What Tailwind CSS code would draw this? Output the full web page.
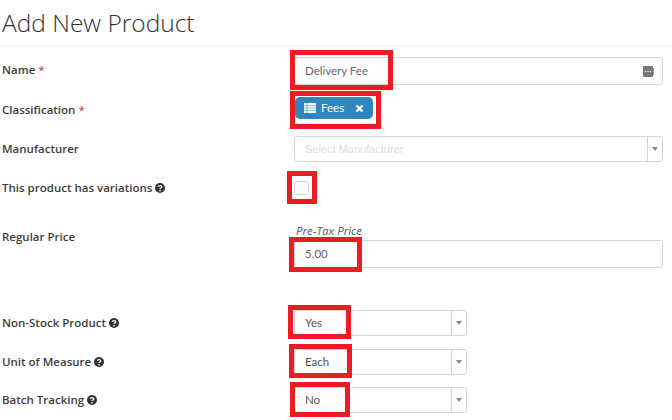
<!DOCTYPE html>
<html lang="en">
<head>
  <meta charset="UTF-8" />
  <title>Add New Product</title>
  <script src="https://cdn.jsdelivr.net/npm/@tailwindcss/browser@4"></script>
</head>
<body class="bg-white font-['Open_Sans',sans-serif] text-[#333]">
  <div class="relative w-[672px] h-[420px] overflow-hidden">

    <!-- heading -->
    <div class="h-[46px] pl-[2px] border-b border-[#f0f0f0]">
      <h1 class="text-[24.5px] leading-[46px] font-light text-[#333]">Add New Product</h1>
    </div>

    <div class="pt-[11px] pl-[2px] pr-[9px] flex flex-col">

      <!-- name -->
      <div class="flex h-[28px] mb-[12px]">
        <div class="w-[292px] text-[11.5px] font-semibold leading-[26px] text-[#3d3d3d]">Name <span class="text-[#c9504a]">*</span></div>
        <div class="flex-1 flex items-center justify-between border border-[#d5d5d5] rounded-[3px] pl-[10px] pr-[8px]">
          <span class="font-['Lato',sans-serif] text-[11.5px] text-[#666]">Delivery Fee</span>
          <svg width="11" height="11" viewBox="0 0 11 11"><rect width="10" height="11" rx="1" fill="#777"/><rect x="10" y="2" width="1" height="7" fill="#999"/><circle cx="2.5" cy="5.5" r="0.7" fill="#fff"/><circle cx="5" cy="5.5" r="0.7" fill="#fff"/><circle cx="7.5" cy="5.5" r="0.7" fill="#fff"/></svg>
        </div>
      </div>

      <!-- classification -->
      <div class="flex h-[22px] mb-[17px]">
        <div class="w-[293px] text-[11.5px] font-semibold leading-[26px] text-[#3d3d3d]">Classification <span class="text-[#c9504a]">*</span></div>
        <div class="w-[78px] h-[22px] flex items-center bg-[#2f86bd] rounded-[5px] pl-[9px] pr-[9px] text-white">
          <svg width="12" height="10" viewBox="0 0 12 10" class="mr-[5px]"><rect width="12" height="10" fill="#fff"/><path d="M0 2.6H12M0 5H12M0 7.4H12M3 0V10" stroke="#2f86bd" stroke-width="0.6"/></svg>
          <span class="font-['Lato',sans-serif] text-[11.5px]">Fees</span>
          <svg width="9" height="9" viewBox="0 0 9 9" class="ml-auto"><path d="M1.5 1.5L7.5 7.5M7.5 1.5L1.5 7.5" stroke="#fff" stroke-width="2.4"/></svg>
        </div>
      </div>

      <!-- manufacturer -->
      <div class="flex h-[26px] mb-[19px]">
        <div class="w-[292px] text-[11.5px] font-semibold leading-[26px] text-[#3d3d3d]">Manufacturer</div>
        <div class="flex-1 flex items-center border border-[#d5d5d5] rounded-[4px]">
          <span class="flex-1 pl-[10px] font-['Liberation_Sans',sans-serif] text-[11px] text-[#dcdcdc]">Select Manufacturer</span>
          <span class="w-[15px] h-full flex items-center justify-center border-l border-[#d5d5d5]"><span class="w-0 h-0 border-x-[3px] border-x-transparent border-t-[4px] border-t-[#888]"></span></span>
        </div>
      </div>

      <!-- variations -->
      <div class="flex h-[14px] mb-[45px]">
        <div class="w-[292px] flex items-center gap-[3px] text-[11.5px] font-semibold text-[#3d3d3d]">This product has variations
          <svg width="10" height="10" viewBox="0 0 10 10"><circle cx="5" cy="5" r="5" fill="#333"/><path d="M3.3 3.9C3.4 2.2 6.8 2.2 6.8 3.9C6.8 5 5 5 5 6.1" fill="none" stroke="#fff" stroke-width="1.3"/><rect x="4.3" y="7" width="1.4" height="1.4" fill="#fff"/></svg>
        </div>
        <div class="w-[15px] h-[14px] border border-[#d5d5d5] rounded-[3px]"></div>
      </div>

      <!-- price -->
      <div class="flex h-[28px] mb-[42px]">
        <div class="w-[292px] text-[11.5px] font-semibold leading-[1] -mt-[9px] text-[#3d3d3d]">Regular Price</div>
        <div class="flex-1 relative flex items-center border border-[#d5d5d5] rounded-[3px] pl-[10px]">
          <span class="absolute left-[1px] -top-[17px] text-[11.5px] italic leading-[14px] text-[#555]">Pre-Tax Price</span>
          <span class="font-['Lato',sans-serif] text-[11.5px] text-[#666]">5.00</span>
        </div>
      </div>

      <!-- non-stock -->
      <div class="flex h-[26px] mb-[13px]">
        <div class="w-[292px] flex items-center gap-[3px] text-[11.5px] font-semibold text-[#3d3d3d]">Non-Stock Product
          <svg width="10" height="10" viewBox="0 0 10 10"><circle cx="5" cy="5" r="5" fill="#333"/><path d="M3.3 3.9C3.4 2.2 6.8 2.2 6.8 3.9C6.8 5 5 5 5 6.1" fill="none" stroke="#fff" stroke-width="1.3"/><rect x="4.3" y="7" width="1.4" height="1.4" fill="#fff"/></svg>
        </div>
        <div class="w-[173px] flex items-center border border-[#d5d5d5] rounded-[3px]">
          <span class="flex-1 pl-[10px] font-['Lato',sans-serif] text-[11.5px] text-[#555]">Yes</span>
          <span class="w-[15px] h-full flex items-center justify-center border-l border-[#d5d5d5]"><span class="w-0 h-0 border-x-[3px] border-x-transparent border-t-[4px] border-t-[#888]"></span></span>
        </div>
      </div>

      <!-- unit of measure -->
      <div class="flex h-[26px] mb-[12px]">
        <div class="w-[292px] flex items-center gap-[3px] text-[11.5px] font-semibold text-[#3d3d3d]">Unit of Measure
          <svg width="10" height="10" viewBox="0 0 10 10"><circle cx="5" cy="5" r="5" fill="#333"/><path d="M3.3 3.9C3.4 2.2 6.8 2.2 6.8 3.9C6.8 5 5 5 5 6.1" fill="none" stroke="#fff" stroke-width="1.3"/><rect x="4.3" y="7" width="1.4" height="1.4" fill="#fff"/></svg>
        </div>
        <div class="w-[173px] flex items-center border border-[#d5d5d5] rounded-[3px]">
          <span class="flex-1 pl-[10px] font-['Lato',sans-serif] text-[11.5px] text-[#555]">Each</span>
          <span class="w-[15px] h-full flex items-center justify-center border-l border-[#d5d5d5]"><span class="w-0 h-0 border-x-[3px] border-x-transparent border-t-[4px] border-t-[#888]"></span></span>
        </div>
      </div>

      <!-- batch tracking -->
      <div class="flex h-[26px]">
        <div class="w-[292px] flex items-center gap-[3px] text-[11.5px] font-semibold text-[#3d3d3d]">Batch Tracking
          <svg width="10" height="10" viewBox="0 0 10 10"><circle cx="5" cy="5" r="5" fill="#333"/><path d="M3.3 3.9C3.4 2.2 6.8 2.2 6.8 3.9C6.8 5 5 5 5 6.1" fill="none" stroke="#fff" stroke-width="1.3"/><rect x="4.3" y="7" width="1.4" height="1.4" fill="#fff"/></svg>
        </div>
        <div class="w-[173px] flex items-center border border-[#d5d5d5] rounded-[3px]">
          <span class="flex-1 pl-[10px] font-['Lato',sans-serif] text-[11.5px] text-[#555]">No</span>
          <span class="w-[15px] h-full flex items-center justify-center border-l border-[#d5d5d5]"><span class="w-0 h-0 border-x-[3px] border-x-transparent border-t-[4px] border-t-[#888]"></span></span>
        </div>
      </div>
    </div>

    <!-- red annotation boxes drawn on top of the screenshot -->
    <div class="absolute left-[290px] top-[50px] w-[103px] h-[40px] border-[5px] border-[#ed1c24]"></div>
    <div class="absolute left-[290px] top-[91px] w-[91px] h-[38px] border-[5px] border-[#ed1c24]"></div>
    <div class="absolute left-[287px] top-[171px] w-[30px] h-[33px] border-[5px] border-[#ed1c24]"></div>
    <div class="absolute left-[289px] top-[237px] w-[73px] h-[35px] border-[5px] border-[#ed1c24]"></div>
    <div class="absolute left-[288px] top-[305px] w-[63px] h-[34px] border-[5px] border-[#ed1c24]"></div>
    <div class="absolute left-[289px] top-[344px] w-[63px] h-[34px] border-[5px] border-[#ed1c24]"></div>
    <div class="absolute left-[290px] top-[382px] w-[60px] h-[35px] border-[5px] border-[#ed1c24]"></div>
  </div>
</body>
</html>
